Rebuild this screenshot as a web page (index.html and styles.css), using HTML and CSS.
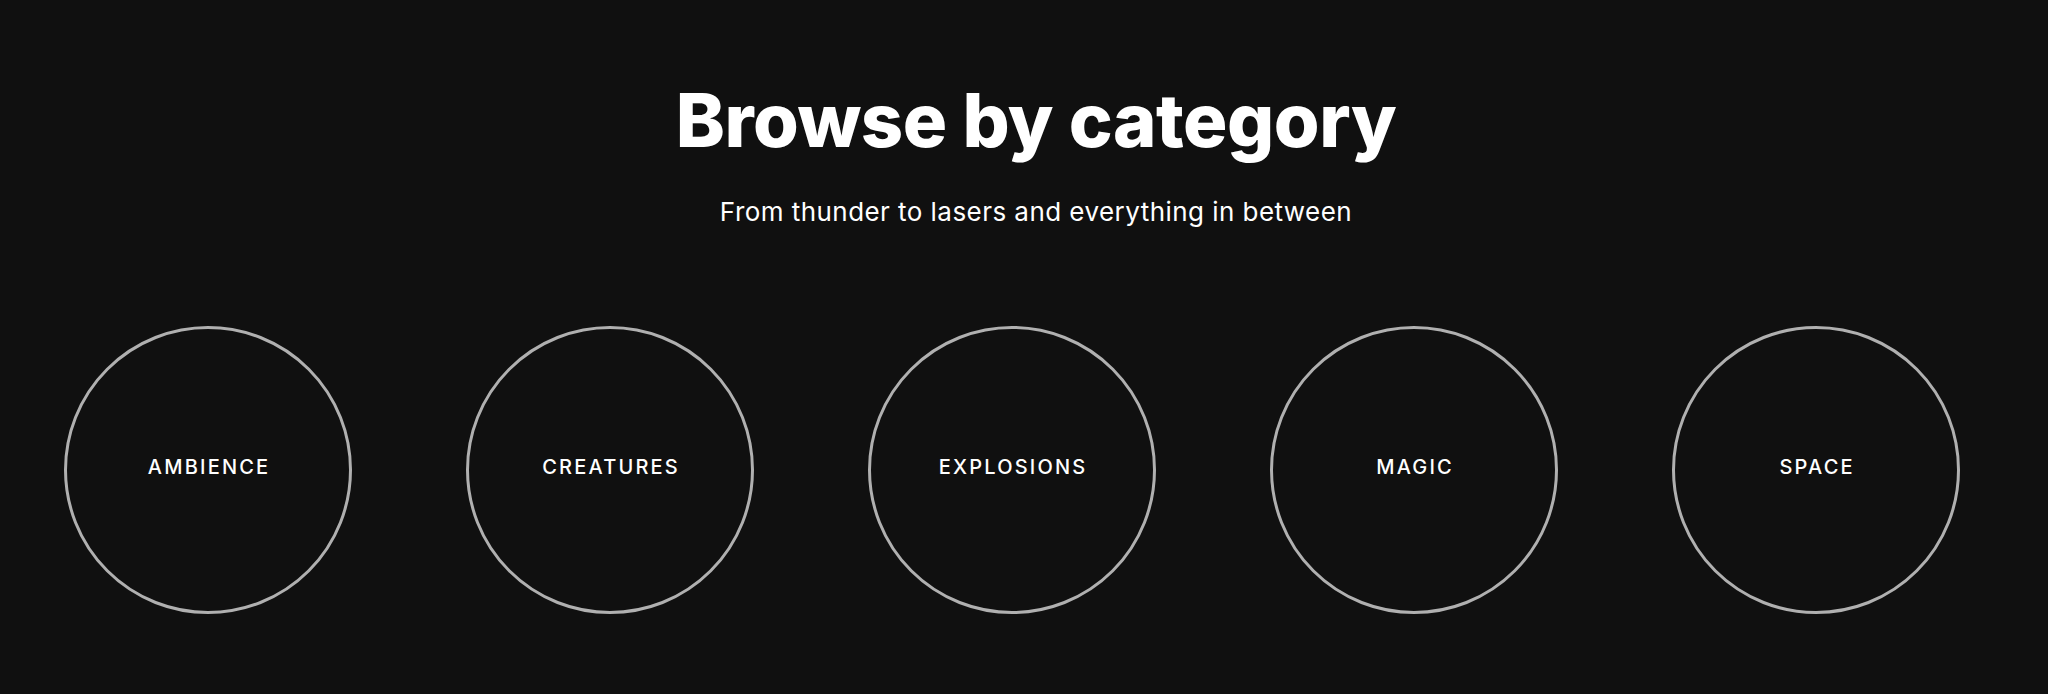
FILE: index.html
```html
<!DOCTYPE html>
<html lang="en">
<head>
<meta charset="utf-8">
<title>Browse by category</title>
<link rel="stylesheet" href="styles.css">
</head>
<body>
<section class="browse">
  <header class="browse-head">
    <h1 class="browse-title">Browse by category</h1>
    <p class="browse-sub">From thunder to lasers and everything in between</p>
  </header>
  <ul class="cats">
    <li class="cat"><a class="cat-link" href="#">AMBIENCE</a></li>
    <li class="cat"><a class="cat-link" href="#">CREATURES</a></li>
    <li class="cat"><a class="cat-link" href="#">EXPLOSIONS</a></li>
    <li class="cat"><a class="cat-link" href="#">MAGIC</a></li>
    <li class="cat"><a class="cat-link" href="#">SPACE</a></li>
  </ul>
</section>
</body>
</html>
```
FILE: styles.css
```css
html, body {
  margin: 0;
  padding: 0;
  background: #101010;
}
body {
  width: 2048px;
  height: 694px;
  overflow: hidden;
  color: #ffffff;
  font-family: "Inter", "Liberation Sans", sans-serif;
}
.browse {
  display: flex;
  flex-direction: column;
  padding-top: 76px;
}
.browse-head {
  display: flex;
  flex-direction: column;
  align-items: center;
  padding-left: 24px;
}
.browse-title {
  margin: 0;
  font-size: 74px;
  line-height: 88px;
  font-weight: 800;
  letter-spacing: -0.5px;
}
.browse-sub {
  margin: 32px 0 0 0;
  font-size: 26px;
  line-height: 32px;
  font-weight: 400;
  letter-spacing: 0.45px;
}
.cats {
  list-style: none;
  margin: 98px 0 0 0;
  padding: 0 0 0 64px;
  display: flex;
  gap: 114px;
}
.cat {
  width: 288px;
  height: 288px;
  box-sizing: border-box;
  border: 3px solid #b0b0b0;
  border-radius: 50%;
  display: flex;
  align-items: center;
  justify-content: center;
}
.cat-link {
  color: #ffffff;
  text-decoration: none;
  font-size: 20px;
  font-weight: 500;
  letter-spacing: 2.2px;
  padding-left: 2.2px;
  margin-top: -6px;
}
```
